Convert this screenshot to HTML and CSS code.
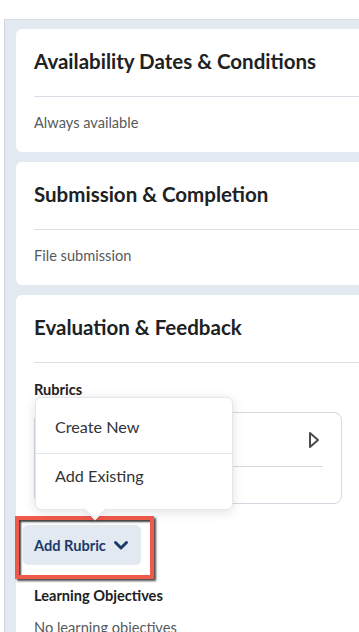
FILE: index.html
```html
<!DOCTYPE html>
<html lang="en">
<head>
<meta charset="utf-8">
<title>Assignment settings</title>
<link rel="stylesheet" href="styles.css">
</head>
<body>
<div class="page">
  <section class="card">
    <h2 class="card-title">Availability Dates &amp; Conditions</h2>
    <div class="divider"></div>
    <p class="card-text">Always available</p>
  </section>
  <section class="card">
    <h2 class="card-title">Submission &amp; Completion</h2>
    <div class="divider"></div>
    <p class="card-text">File submission</p>
  </section>
  <section class="card card-eval">
    <h2 class="card-title">Evaluation &amp; Feedback</h2>
    <div class="divider"></div>
    <h3 class="label">Rubrics</h3>
    <div class="rubric-box">
      <div class="rubric-row">
        <svg class="play-icon" width="12" height="18" viewBox="0 0 12 18"><path d="M2 2 L10 9 L2 16 Z" fill="none" stroke="#494c4e" stroke-width="2" stroke-linejoin="round"/></svg>
      </div>
      <div class="rubric-line"></div>
    </div>
    <div class="btn-wrap">
      <button class="btn-subtle">Add Rubric
        <svg class="chev" width="16" height="11" viewBox="0 0 16 11"><path d="M2.5 2.5 L8 8 L13.5 2.5" fill="none" stroke="#1b3a6b" stroke-width="3" stroke-linecap="round" stroke-linejoin="round"/></svg>
      </button>
      <div class="highlight"></div>
    </div>
    <h3 class="label label-lo">Learning Objectives</h3>
    <p class="card-text small-gap">No learning objectives</p>

    <div class="menu">
      <div class="menu-item">Create New</div>
      <div class="menu-item menu-item-second">Add Existing</div>
      <div class="menu-pointer"></div>
    </div>
  </section>
</div>
</body>
</html>
```

FILE: styles.css
```css
html, body {
  margin: 0;
  padding: 0;
  overflow: hidden;
  background: #ffffff;
}
body {
  font-family: Lato, "Noto Sans", "Liberation Sans", sans-serif;
  color: #494c4e;
  width: 359px;
  height: 632px;
}
.page {
  margin-top: 19px;
  margin-left: 4px;
  width: 440px;
  min-height: 700px;
  background: #e3e9f1;
  border-top: 1px solid #d6dce5;
  border-left: 1px solid #d0d6df;
  padding: 9px 0 0 11px;
  box-sizing: border-box;
  display: flex;
  flex-direction: column;
  gap: 10px;
}
.card {
  background: #ffffff;
  border-radius: 6px 0 0 6px;
  padding: 17px 0 19px 18px;
}
.card-eval {
  position: relative;
  padding-bottom: 40px;
}
.card-title {
  margin: 0;
  font-size: 20.5px;
  line-height: 30px;
  font-weight: 700;
  color: #202122;
}
.divider {
  height: 1px;
  background: #d9dfe7;
  margin-top: 20px;
}
.card-text {
  margin: 16px 0 0;
  font-size: 14.6px;
  line-height: 20px;
  color: #565a5c;
}
.card-text.small-gap {
  margin-top: 12px;
}
.label {
  margin: 17px 0 0;
  font-size: 14.6px;
  line-height: 20px;
  font-weight: 700;
  color: #202122;
}
.label-lo {
  margin-top: 21px;
}
.rubric-box {
  margin-top: 12px;
  width: 308px;
  height: 92px;
  box-sizing: border-box;
  border: 1px solid #d3d9e1;
  border-radius: 8px;
  padding: 0 18px 0 18px;
}
.rubric-row {
  height: 53px;
  display: flex;
  align-items: center;
  justify-content: flex-end;
  padding-right: 3px;
}
.play-icon {
  display: block;
}
.rubric-line {
  height: 1px;
  background: #d3d9e1;
}
.btn-wrap {
  position: relative;
  margin-top: 21px;
  margin-left: -11px;
  width: 118px;
}
.btn-subtle {
  display: flex;
  align-items: center;
  gap: 7px;
  width: 118px;
  height: 40px;
  border: none;
  border-radius: 5px;
  background: #e3e9f1;
  padding: 0 0 0 11px;
  font-family: Lato, "Noto Sans", "Liberation Sans", sans-serif;
  font-size: 14.6px;
  font-weight: 700;
  color: #1b3a6b;
}
.chev {
  display: block;
  margin-top: 1px;
}
.highlight {
  position: absolute;
  left: -8px;
  top: -9px;
  width: 139px;
  height: 63px;
  box-sizing: border-box;
  border: 4px solid #f05a4b;
  box-shadow: inset 2px 2px 2px rgba(30, 30, 30, 0.85), 2px 2px 2px rgba(30, 30, 30, 0.8);
}
.menu {
  position: absolute;
  left: 19px;
  top: 102px;
  width: 198px;
  box-sizing: border-box;
  background: #ffffff;
  border: 1px solid #e3e7ec;
  border-radius: 6px;
  box-shadow: 0 2px 12px rgba(0, 0, 0, 0.12);
  padding: 5px 0;
}
.menu-item {
  padding: 14px 19px 16px;
  font-size: 16.2px;
  line-height: 20px;
  color: #313438;
}
.menu-item-second {
  border-top: 1px solid #e3e7ec;
  padding-top: 12px;
  padding-bottom: 18px;
}
.menu-pointer {
  position: absolute;
  left: 51px;
  bottom: -8px;
  width: 15px;
  height: 15px;
  background: #ffffff;
  border-right: 1px solid #e3e7ec;
  border-bottom: 1px solid #e3e7ec;
  transform: rotate(45deg);
  box-shadow: 3px 3px 6px rgba(0, 0, 0, 0.06);
}
```
